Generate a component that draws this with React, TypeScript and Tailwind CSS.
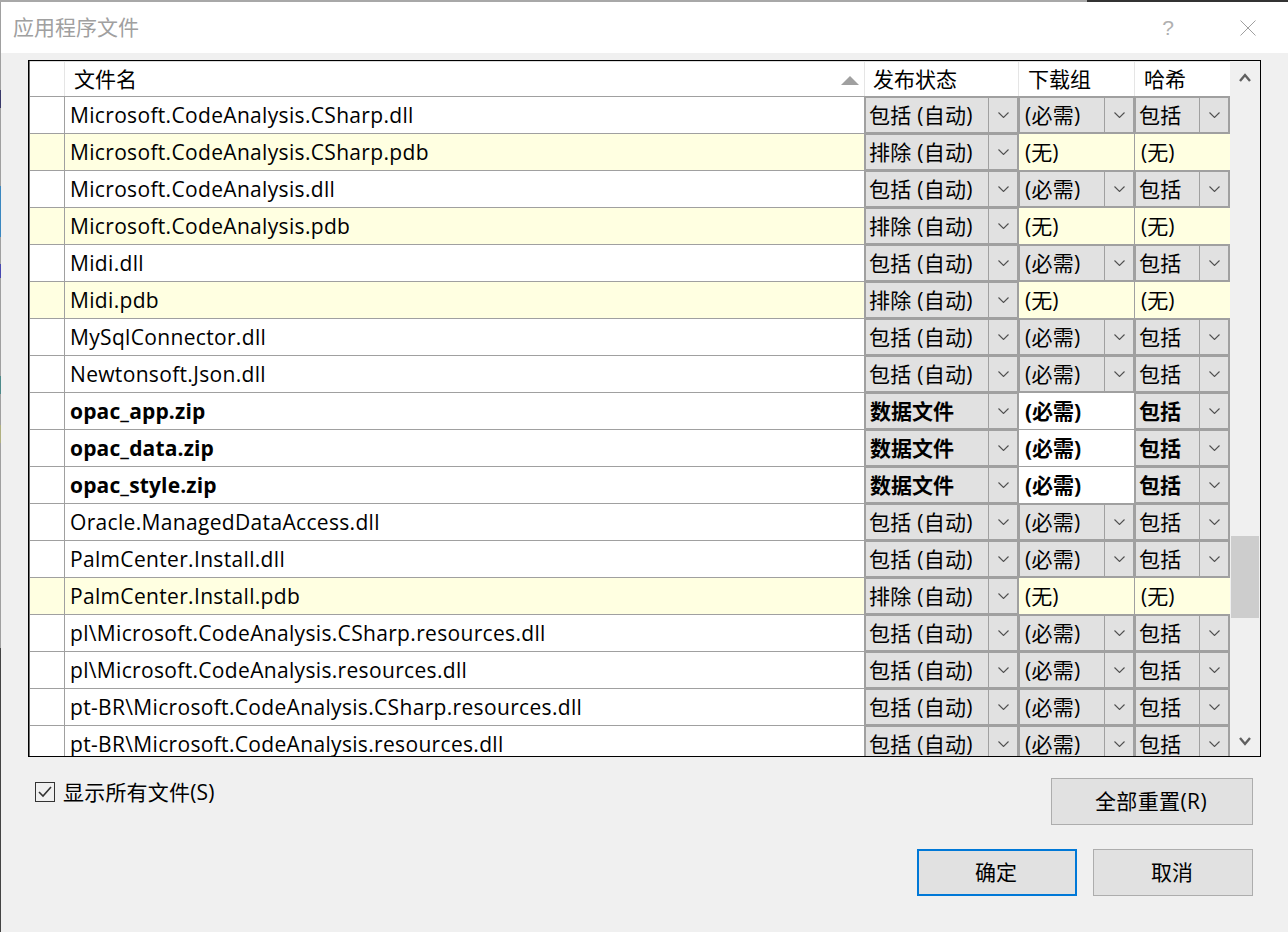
import React from 'react';

type RowKind = 'auto' | 'pdb' | 'data';

const rows: { name: string; kind: RowKind }[] = [
  { name: 'Microsoft.CodeAnalysis.CSharp.dll', kind: 'auto' },
  { name: 'Microsoft.CodeAnalysis.CSharp.pdb', kind: 'pdb' },
  { name: 'Microsoft.CodeAnalysis.dll', kind: 'auto' },
  { name: 'Microsoft.CodeAnalysis.pdb', kind: 'pdb' },
  { name: 'Midi.dll', kind: 'auto' },
  { name: 'Midi.pdb', kind: 'pdb' },
  { name: 'MySqlConnector.dll', kind: 'auto' },
  { name: 'Newtonsoft.Json.dll', kind: 'auto' },
  { name: 'opac_app.zip', kind: 'data' },
  { name: 'opac_data.zip', kind: 'data' },
  { name: 'opac_style.zip', kind: 'data' },
  { name: 'Oracle.ManagedDataAccess.dll', kind: 'auto' },
  { name: 'PalmCenter.Install.dll', kind: 'auto' },
  { name: 'PalmCenter.Install.pdb', kind: 'pdb' },
  { name: 'pl\\Microsoft.CodeAnalysis.CSharp.resources.dll', kind: 'auto' },
  { name: 'pl\\Microsoft.CodeAnalysis.resources.dll', kind: 'auto' },
  { name: 'pt-BR\\Microsoft.CodeAnalysis.CSharp.resources.dll', kind: 'auto' },
  { name: 'pt-BR\\Microsoft.CodeAnalysis.resources.dll', kind: 'auto' },
];

// bits of the desktop that show past the window edge
const edgeBits = [
  'h-[88px] bg-[#a0a0a0]',
  'h-[18px] bg-[#3a3a6a]',
  'h-[78px] bg-[#a0a0a0]',
  'h-[51px] bg-[#3a87c0]',
  'h-[27px] bg-[#a0a0a0]',
  'h-[14px] bg-[#4848b0]',
  'h-[98px] bg-[#a0a0a0]',
  'h-[18px] bg-[#4d8a8a]',
  'h-[31px] bg-[#a0a0a0]',
  'h-[18px] bg-[#b0b080]',
  'h-[205px] bg-[#a0a0a0]',
  'flex-1 bg-[#444444]',
];

const Chevron = () => (
  <svg width="11" height="6" viewBox="0 0 11 6" fill="none" stroke="#505050" strokeWidth="1.1">
    <path d="M0.5 0.5 L5.5 5.5 L10.5 0.5" />
  </svg>
);

const Combo = ({ text, bold, pad = 'pl-[3px]' }: { text: string; bold?: boolean; pad?: string }) => (
  <div className="h-full flex bg-[#e1e1e1] border border-[#a0a0a0]">
    <div className={`flex-1 leading-[35px] whitespace-nowrap ${pad} ${bold ? 'font-bold' : 'tracking-[0.25px]'}`}>
      {text}
    </div>
    <div className="w-[29px] border-l border-[#a0a0a0] flex items-center justify-center pb-[1px]">
      <Chevron />
    </div>
  </div>
);

const Plain = ({ text, bold }: { text: string; bold?: boolean }) => (
  <div className={`h-full pl-[6px] leading-[36px] whitespace-nowrap ${bold ? 'font-bold' : ''}`}>{text}</div>
);

const Row = ({ name, kind }: { name: string; kind: RowKind }) => {
  const bg = kind === 'pdb' ? 'bg-[#ffffe1]' : 'bg-white';
  const bold = kind === 'data';
  return (
    <div className={`grid grid-cols-[35px_800px_154px_116px_95px] grid-rows-[37px] h-[37px] shrink-0 ${bg}`}>
      <div className="border-r border-b border-[#a0a0a0]" />
      <div
        className={`border-r border-b border-[#a0a0a0] pl-[5px] leading-[36px] whitespace-nowrap ${
          bold ? 'font-bold tracking-[0.15px]' : 'tracking-[0.33px]'
        }`}
      >
        {name}
      </div>
      <div className="border-r border-b border-[#a0a0a0]">
        <Combo
          text={kind === 'auto' ? '包括 (自动)' : kind === 'pdb' ? '排除 (自动)' : '数据文件'}
          bold={bold}
          pad={bold ? 'pl-[4px]' : 'pl-[3px]'}
        />
      </div>
      <div className="border-r border-b border-[#a0a0a0]">
        {kind === 'auto' ? (
          <Combo text="(必需)" pad="pl-[5px]" />
        ) : (
          <Plain text={kind === 'pdb' ? '(无)' : '(必需)'} bold={bold} />
        )}
      </div>
      {kind === 'pdb' ? (
        <div className="border-b border-[#a0a0a0]">
          <Plain text="(无)" />
        </div>
      ) : (
        <div className="border-r border-b border-[#a0a0a0]">
          <Combo text="包括" bold={bold} />
        </div>
      )}
    </div>
  );
};

const Header = () => (
  <div className="grid grid-cols-[35px_800px_154px_116px_95px] h-[36px] shrink-0 bg-white border-t border-t-[#dcdcdc] border-b border-b-[#a0a0a0]">
    <div className="border-r border-[#e5e5e5]" />
    <div className="border-r border-[#e5e5e5] pl-[9px] leading-[34px] flex justify-between items-center pr-[5px]">
      <span>文件名</span>
      <svg width="18" height="9" viewBox="0 0 18 9" className="mt-[2px]">
        <path d="M9 0 L18 9 L0 9 Z" fill="#a0a0a0" />
      </svg>
    </div>
    <div className="border-r border-[#e5e5e5] pl-[8px] leading-[34px]">发布状态</div>
    <div className="border-r border-[#e5e5e5] pl-[9px] leading-[34px]">下载组</div>
    <div className="pl-[9px] leading-[34px]">哈希</div>
  </div>
);

const Scrollbar = () => (
  <div className="w-[30px] bg-[#f0f0f0] flex flex-col items-center">
    <div className="h-[33px] flex items-center justify-center shrink-0">
      <svg width="12" height="9" viewBox="0 0 12 9" fill="none" stroke="#606060" strokeWidth="2.4">
        <path d="M1 8 L6 2 L11 8" />
      </svg>
    </div>
    <div className="h-[442px] shrink-0" />
    <div className="w-[28px] h-[82px] bg-[#cdcdcd] shrink-0" />
    <div className="flex-1" />
    <div className="h-[30px] flex items-center justify-center shrink-0">
      <svg width="12" height="9" viewBox="0 0 12 9" fill="none" stroke="#606060" strokeWidth="2.4">
        <path d="M1 1 L6 7 L11 1" />
      </svg>
    </div>
  </div>
);

const Button = ({ label, primary, className }: { label: string; primary?: boolean; className: string }) => (
  <button
    className={`h-[47px] bg-[#e1e1e1] text-center pr-[2px] ${
      primary ? 'border-2 border-[#0078d7]' : 'border border-[#adadad]'
    } ${className}`}
  >
    {label}
  </button>
);

export default function App() {
  return (
    <div className="w-[1288px] h-[932px] flex flex-col bg-[#f0f0f0] overflow-hidden text-[21px] text-black font-['Open_Sans','Noto_Sans_CJK_SC',sans-serif]">
      {/* window top edge, desktop shows on the right */}
      <div className="h-[2px] flex shrink-0">
        <div className="w-[1087px] bg-[#a8a8a8]" />
        <div className="flex-1 bg-[#333333]" />
      </div>

      <div className="flex-1 flex">
        <div className="w-[1px] flex flex-col">
          {edgeBits.map((c, i) => (
            <div key={i} className={c} />
          ))}
        </div>

        <div className="flex-1">
          {/* Title bar */}
          <div className="h-[51px] bg-white flex items-center pl-[12px] text-[#a0a0a0]">
            <span className="flex-1">应用程序文件</span>
            <span className="w-[20px] text-center font-['Liberation_Sans',sans-serif] text-[#b0b0b0]">?</span>
            <div className="ml-[62px] mr-[32px]">
              <svg width="16" height="16" viewBox="0 0 16 16" fill="none" stroke="#a0a0a0" strokeWidth="1" className="block">
                <path d="M0.5 0.5 L15.5 15.5 M15.5 0.5 L0.5 15.5" />
              </svg>
            </div>
          </div>

          {/* File grid */}
          <div className="ml-[27px] mt-[7px] w-[1233px] h-[697px] border border-black bg-[#f0f0f0] flex overflow-hidden">
            <div className="w-[1201px] h-full flex flex-col overflow-hidden border-l border-[#707070]">
              <Header />
              {rows.map((r) => (
                <Row key={r.name} name={r.name} kind={r.kind} />
              ))}
            </div>
            <Scrollbar />
          </div>

          {/* Footer */}
          <div className="flex justify-between">
            <label className="ml-[34px] mt-[25px] h-[20px] flex items-center gap-[8px] whitespace-nowrap">
              <span className="w-[20px] h-[20px] border border-[#333333] flex items-center justify-center">
                <svg width="14" height="12" viewBox="0 0 14 12" fill="none" stroke="#333333" strokeWidth="1.6">
                  <path d="M1 6 L5 10 L13 1" />
                </svg>
              </span>
              <span className="pt-[2px] tracking-[0.2px]">显示所有文件(S)</span>
            </label>
            <Button label="全部重置(R)" className="w-[202px] mt-[21px] mr-[35px] tracking-[0.4px]" />
          </div>
          <div className="flex justify-end gap-[16px] mt-[24px] mr-[35px]">
            <Button label="确定" primary className="w-[160px]" />
            <Button label="取消" className="w-[160px]" />
          </div>
        </div>
      </div>
    </div>
  );
}
